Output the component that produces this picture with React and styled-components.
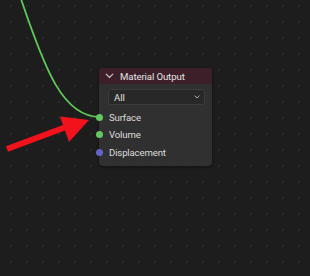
import React from "react";
import styled, { createGlobalStyle } from "styled-components";

const GlobalStyle = createGlobalStyle`
    html, body {
        margin: 0;
        padding: 0;
        background: #1d1d1d;
    }
    body {
        font-family: Roboto, "Liberation Sans", sans-serif;
    }
`;

const Canvas = styled.div`
    position: relative;
    width: 310px;
    height: 276px;
    overflow: hidden;
    background-color: #1d1d1d;
    background-image: radial-gradient(circle, #2c2c2c 0.8px, transparent 1.2px);
    background-size: 16px 16px;
    background-position: 3px -2px;
`;

const Overlay = styled.svg`
    position: absolute;
    left: 0;
    top: 0;
    z-index: ${(p) => p.$z};
    pointer-events: none;
`;

// node sits on the free canvas, so it keeps its place there
const Node = styled.div`
    position: absolute;
    left: 99px;
    top: 68px;
    width: 113px;
    border-radius: 4px;
    background: #303030;
    box-shadow: 0 1px 3px rgba(0, 0, 0, 0.5);
    z-index: 1;
`;

const Header = styled.div`
    display: flex;
    align-items: center;
    gap: 6px;
    height: 16px;
    padding-left: 6px;
    background: #3d1f29;
    border-radius: 4px 4px 0 0;
    color: #e4e4e4;
    font-size: 9.6px;
    letter-spacing: -0.1px;
`;

const Body = styled.div`
    display: flex;
    flex-direction: column;
    padding: 5px 0 5px 0;
`;

const Select = styled.div`
    display: flex;
    align-items: center;
    justify-content: space-between;
    box-sizing: border-box;
    height: 16px;
    margin: 0 7px 3.5px 9px;
    padding: 0 4px 0 5px;
    background: #282828;
    border: 1px solid #3c3c3c;
    border-radius: 3px;
    color: #e0e0e0;
    font-size: 9.6px;
`;

const Row = styled.div`
    position: relative;
    display: flex;
    align-items: center;
    height: 17.5px;
    padding-left: 10px;
    color: #dcdcdc;
    font-size: 9.6px;
    letter-spacing: -0.15px;
`;

const Socket = styled.span`
    position: absolute;
    left: -3.5px;
    top: 50%;
    width: 7px;
    height: 7px;
    margin-top: -3.5px;
    border-radius: 50%;
    background: ${(p) => p.$color};
`;

const Chevron = ({ size = 8, color = "#cfcfcf" }) => (
    <svg width={size} height={size * 0.6} viewBox="0 0 10 6">
        <path d="M1 1 L5 5 L9 1" fill="none" stroke={color} strokeWidth="1.3" />
    </svg>
);

const sockets = [
    { name: "Surface", color: "#63c763" },
    { name: "Volume", color: "#63c763" },
    { name: "Displacement", color: "#6363c7" },
];

const App = () => {
    return (
        <>
        <GlobalStyle />
        <Canvas>
            <Overlay $z={0} width="310" height="276">
                <path d="M21 -1 C45 70, 63 117, 100 117" fill="none" stroke="#5fc85a" strokeWidth="1.8" />
            </Overlay>

            <Node>
                <Header>
                    <Chevron size={9} />
                    <span>Material Output</span>
                </Header>
                <Body>
                    <Select>
                        <span>All</span>
                        <Chevron size={6} color="#d8d8d8" />
                    </Select>
                    {sockets.map((s) => (
                        <Row key={s.name}>
                            <Socket $color={s.color} />
                            {s.name}
                        </Row>
                    ))}
                </Body>
            </Node>

            <Overlay $z={2} width="310" height="276">
                <line x1="7" y1="149" x2="66" y2="127" stroke="#f2121c" strokeWidth="6" />
                <polygon points="89,120 60,116.5 69,142" fill="#f2121c" />
            </Overlay>
        </Canvas>
        </>
    );
};

export default App;
